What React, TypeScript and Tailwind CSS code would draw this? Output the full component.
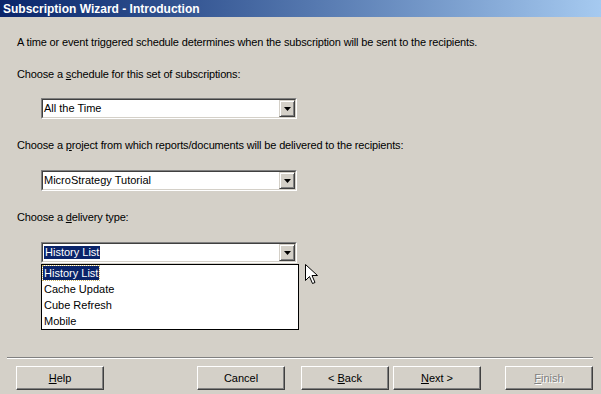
import type { ReactNode } from "react";

const FONT = "font-['Liberation_Sans',Arial,sans-serif]";

function U({ children }: { children: ReactNode }) {
  return <span className="underline underline-offset-[1px]">{children}</span>;
}

function Arrow() {
  return (
    <svg width="7" height="4" viewBox="0 0 7 4" className="block">
      <path d="M0 0h7L3.5 4z" fill="#000" />
    </svg>
  );
}

function Combo({ children }: { children: ReactNode }) {
  return (
    <div className="ml-[24px] w-[256px] h-[21px] border border-t-[#808080] border-l-[#808080] border-r-white border-b-white">
      <div className="flex h-full border border-t-[#404040] border-l-[#404040] border-r-[#d4d0c8] border-b-[#d4d0c8] bg-white">
        <div className="flex-1 flex items-center pl-[1px] text-[11px] leading-[13px] text-black">{children}</div>
        <div className="w-[16px] h-[17px] flex items-center justify-center bg-[#d4d0c8] border border-t-[#d4d0c8] border-l-[#d4d0c8] border-r-[#404040] border-b-[#404040] shadow-[inset_1px_1px_0_#fff,inset_-1px_-1px_0_#808080]">
          <Arrow />
        </div>
      </div>
    </div>
  );
}

function Btn({ children, className = "", disabled = false }: { children: ReactNode; className?: string; disabled?: boolean }) {
  return (
    <div
      className={`w-[88px] h-[24px] flex items-center justify-center bg-[#d4d0c8] border border-t-white border-l-white border-r-[#404040] border-b-[#404040] shadow-[inset_-1px_-1px_0_#808080] text-[11px] whitespace-pre ${
        disabled ? "text-[#808080] [text-shadow:1px_1px_0_#fff]" : "text-black"
      } ${className}`}
    >
      {children}
    </div>
  );
}

function Cursor() {
  return (
    <svg width="13" height="21" viewBox="0 0 13 21" className="absolute left-[305px] top-[264px]">
      <path
        d="M0.5 0.5V16.5L4.5 12.5L7.5 19.5L10 18.5L7 11.5H12.5Z"
        fill="#fff"
        stroke="#000"
        strokeWidth="1"
        strokeLinejoin="miter"
      />
    </svg>
  );
}

export default function App() {
  return (
    <div className={`relative w-[601px] h-[394px] flex flex-col bg-[#d4d0c8] overflow-hidden ${FONT}`}>
      <div className="h-[17px] flex items-center pl-[3px] bg-gradient-to-r from-[#0a246a] to-[#a6caf0] text-white text-[12px] font-bold">
        Subscription Wizard - Introduction
      </div>

      <div className="flex flex-col pl-[17px] text-[11px] leading-[13px] tracking-[-0.15px] text-black">
        <p className="mt-[19px]">A time or event triggered schedule determines when the subscription will be sent to the recipients.</p>
        <p className="mt-[19px]">
          Choose a <U>s</U>chedule for this set of subscriptions:
        </p>
        <div className="mt-[17px] tracking-normal">
          <Combo>All the Time</Combo>
        </div>
        <p className="mt-[20px]">
          Choose a <U>p</U>roject from which reports/documents will be delivered to the recipients:
        </p>
        <div className="mt-[18px] tracking-normal">
          <Combo>MicroStrategy Tutorial</Combo>
        </div>
        <p className="mt-[20px]">
          Choose a <U>d</U>elivery type:
        </p>
        <div className="mt-[18px] relative tracking-normal">
          <Combo>
            <span className="bg-[#0a246a] text-white px-[1px]">History List</span>
          </Combo>
          <div className="absolute left-[24px] top-[22px] w-[258px] border border-black bg-white text-[11px] leading-[16px] text-black">
            <div className="h-[16px] flex items-center pl-[1px]">
              <span className="bg-[#0a246a] text-white px-[1px] leading-[14px] outline outline-1 outline-dotted outline-[#c9b468]">History List</span>
            </div>
            <div className="h-[16px] pl-[2px]">Cache Update</div>
            <div className="h-[16px] pl-[2px]">Cube Refresh</div>
            <div className="h-[16px] pl-[2px]">Mobile</div>
          </div>
        </div>
      </div>

      <div className="mt-auto flex flex-col">
        <div className="ml-[7px] mr-[8px] h-[2px] border-t border-t-[#808080] border-b border-b-white" />
        <div className="mt-[7px] mb-[4px] flex pl-[16px]">
          <Btn>
            <U>H</U>elp
          </Btn>
          <Btn className="ml-[93px]">Cancel</Btn>
          <Btn className="ml-[16px]">
            {"< "}
            <U>B</U>ack
          </Btn>
          <Btn className="ml-[4px]">
            <U>N</U>
            {"ext >"}
          </Btn>
          <Btn className="ml-[24px]" disabled>
            <U>F</U>inish
          </Btn>
        </div>
      </div>

      <Cursor />
    </div>
  );
}
